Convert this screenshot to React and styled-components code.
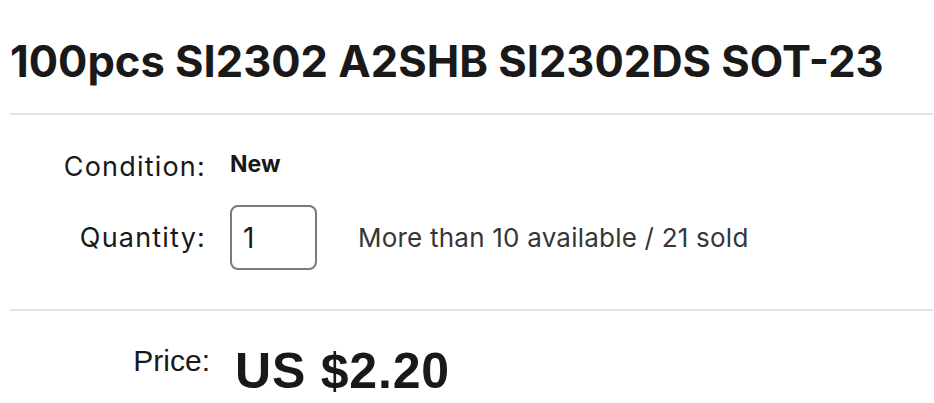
import React from "react";
import styled, { createGlobalStyle } from "styled-components";

const Global = createGlobalStyle`
  html, body { margin: 0; padding: 0; background: #fff; }
  body { font-family: Inter, "Liberation Sans", sans-serif; color: #191919; }
`;

const Page = styled.div`
  padding: 0 1px 0 10px;
  width: 934px;
  box-sizing: border-box;
`;

const Title = styled.h1`
  margin: 0;
  padding-top: 33px;
  padding-bottom: 24px;
  font-family: Inter, "Liberation Sans", sans-serif;
  font-weight: 700;
  font-size: 43.5px;
  line-height: 56px;
  color: #191919;
  white-space: nowrap;
`;

const Divider = styled.hr`
  margin: 0;
  border: 0;
  height: 2px;
  background: #e5e5e5;
`;

const Section = styled.div`
  display: grid;
  grid-template-columns: 196px 1fr;
  column-gap: 24px;
  row-gap: ${(p) => p.$rowGap || 0}px;
  padding: ${(p) => p.$pad};
  align-items: ${(p) => p.$align || "center"};
`;

const Label = styled.div`
  justify-self: end;
  font-family: Inter, "Liberation Sans", sans-serif;
  font-size: 27px;
  line-height: 34px;
  letter-spacing: 1.2px;
  color: #191919;
  align-self: ${(p) => p.$align || "center"};
`;

const PriceLabel = styled.div`
  justify-self: end;
  margin-top: 2px;
  margin-right: -4px;
  font-family: "Liberation Sans", Arial, sans-serif;
  font-size: 30px;
  line-height: 1.2;
  color: #191919;
`;

const Value = styled.div`
  display: flex;
  align-items: center;
  gap: 41px;
  padding-left: ${(p) => p.$indent || 0}px;
  align-self: ${(p) => p.$align || "center"};
`;

const Strong = styled.span`
  font-weight: 700;
  font-size: 23px;
  line-height: 28px;
  color: #191919;
`;

const QtyBox = styled.div`
  width: 87px;
  height: 65px;
  box-sizing: border-box;
  border: 2px solid #7a7a7a;
  border-radius: 8px;
  display: flex;
  align-items: center;
  padding-left: 11px;
  font-size: 28px;
  line-height: 34px;
  color: #191919;
`;

const Avail = styled.span`
  font-size: 26px;
  letter-spacing: 0.22px;
  color: #363636;
`;

const Price = styled.span`
  font-family: "Liberation Sans", Arial, sans-serif;
  font-weight: 700;
  font-size: 50px;
  line-height: 60px;
  letter-spacing: 0.8px;
  color: #191919;
`;

export default function App() {
  return (
    <Page>
      <Global />
      <Title>100pcs SI2302 A2SHB SI2302DS SOT-23</Title>
      <Divider />
      <Section $pad="35px 0 39px" $rowGap={21}>
        <Label $align="start">Condition:</Label>
        <Value $align="start">
          <Strong>New</Strong>
        </Value>
        <Label>Quantity:</Label>
        <Value>
          <QtyBox>1</QtyBox>
          <Avail>More than 10 available / 21 sold</Avail>
        </Value>
      </Section>
      <Divider />
      <Section $pad="30px 0 0" $align="start">
        <PriceLabel>Price:</PriceLabel>
        <Value $indent={5} $align="start">
          <Price>US $2.20</Price>
        </Value>
      </Section>
    </Page>
  );
}
